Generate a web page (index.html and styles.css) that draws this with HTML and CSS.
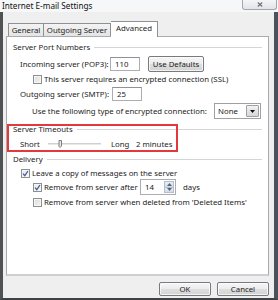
FILE: index.html
```html
<!DOCTYPE html>
<html>
<head>
<meta charset="utf-8">
<link rel="stylesheet" href="styles.css">
</head>
<body>
<div class="window">
  <div class="titlebar">
    <span class="title">Internet E-mail Settings</span>
    <span class="close"><svg width="6" height="5" viewBox="0 0 6 5"><path d="M0.8 0.5 L5.2 4.5 M5.2 0.5 L0.8 4.5" stroke="#707070" stroke-width="1.1" fill="none"/></svg></span>
  </div>
  <div class="frame">
    <div class="tabs">
      <div class="tab t-general">General</div>
      <div class="tab t-outgoing">Outgoing Server</div>
      <div class="tab t-advanced selected">Advanced</div>
    </div>
    <div class="panel">
      <div class="group-head"><span>Server Port Numbers</span><span class="rule"></span></div>

      <div class="row r-incoming">
        <span class="lbl lbl-in">Incoming server (POP3):</span>
        <span class="input in-port">110</span>
        <span class="btn btn-defaults">Use Defaults</span>
      </div>

      <div class="row r-ssl">
        <span class="cb"></span>
        <span class="cb-text">This server requires an encrypted connection (SSL)</span>
      </div>

      <div class="row r-outgoing">
        <span class="lbl lbl-out">Outgoing server (SMTP):</span>
        <span class="input out-port">25</span>
      </div>

      <div class="row r-encrypt">
        <span class="lbl lbl-enc">Use the following type of encrypted connection:</span>
        <span class="select"><span class="sel-text">None</span><span class="sel-btn"><svg width="5" height="3" viewBox="0 0 5 3"><path d="M0 0 H5 L2.5 3 Z" fill="#111"/></svg></span></span>
      </div>

      <div class="group-head gh-timeouts"><span>Server Timeouts</span><span class="rule"></span></div>

      <div class="row r-slider">
        <span class="lbl lbl-short">Short</span>
        <span class="slider"><span class="track"></span><svg class="thumb" width="5" height="8" viewBox="0 0 5 8"><path d="M1 0.5 H3.5 V6 L2 7.5 L1 6.5 Z" fill="#e9e9e9" stroke="#6f6f6f" stroke-width="0.9"/></svg></span>
        <span class="lbl lbl-long">Long</span>
        <span class="lbl">2 minutes</span>
      </div>

      <div class="group-head gh-delivery"><span>Delivery</span><span class="rule"></span></div>

      <div class="row r-leave">
        <span class="cb checked"><svg width="7" height="7" viewBox="0 0 7 7"><path d="M1 3.6 L2.8 5.6 L6 1" stroke="#4a5d93" stroke-width="1.3" fill="none"/></svg></span>
        <span class="cb-text">Leave a copy of messages on the server</span>
      </div>

      <div class="row r-remove">
        <span class="cb checked"><svg width="7" height="7" viewBox="0 0 7 7"><path d="M1 3.6 L2.8 5.6 L6 1" stroke="#4a5d93" stroke-width="1.3" fill="none"/></svg></span>
        <span class="cb-text lbl-remove">Remove from server after</span>
        <span class="spin"><span class="spin-text">14</span><span class="spin-btns"><span class="spin-up"><svg width="5" height="3" viewBox="0 0 5 3"><path d="M0 3 H5 L2.5 0 Z" fill="#56657e"/></svg></span><span class="spin-down"><svg width="5" height="3" viewBox="0 0 5 3"><path d="M0 0 H5 L2.5 3 Z" fill="#56657e"/></svg></span></span></span>
        <span class="lbl lbl-days">days</span>
      </div>

      <div class="row r-deleted">
        <span class="cb"></span>
        <span class="cb-text">Remove from server when deleted from 'Deleted Items'</span>
      </div>

      <div class="highlight"></div>
    </div>
    <div class="footer">
      <span class="btn btn-ok">OK</span>
      <span class="btn btn-cancel">Cancel</span>
    </div>
  </div>
</div>
</body>
</html>
```

FILE: styles.css
```css
* { box-sizing: border-box; }
html, body { margin: 0; padding: 0; }
body {
  font-family: "Noto Sans", "Open Sans", sans-serif;
  font-size: 7.8px;
  color: #1c1c1c;
  background: #ffffff;
}
.window {
  width: 278px;
  height: 300px;
  display: flex;
  flex-direction: column;
  background: #efefef;
}
.titlebar {
  height: 12px;
  flex: none;
  display: flex;
  justify-content: space-between;
  align-items: flex-start;
  background: #f6f7f8;
}
.title {
  padding-left: 2px;
  line-height: 12px;
  font-size: 8.2px;
  color: #111;
}
.close {
  width: 35px;
  height: 10px;
  margin-right: 1px;
  border: 1px solid #a3a7ad;
  border-top: none;
  border-radius: 0 0 3px 3px;
  background: linear-gradient(#f4f5f7, #e2e4e8);
  display: flex;
  align-items: center;
  justify-content: center;
}
.frame {
  flex: 1;
  display: flex;
  flex-direction: column;
  border-left: 3px solid #4f5255;
  border-right: 4px solid #4a535c;
  border-bottom: 2px solid #3f4245;
  background: #efefef;
}
.tabs {
  height: 15px;
  margin-top: 9px;
  margin-left: 5px;
  display: flex;
  align-items: flex-end;
}
.tab {
  height: 13px;
  border: 1px solid #8d9096;
  border-bottom: none;
  background: linear-gradient(#f3f3f3, #e4e4e4);
  display: flex;
  align-items: center;
  justify-content: center;
  line-height: 11px;
  padding-top: 1px;
  white-space: nowrap;
}
.t-general { width: 36px; }
.t-outgoing { width: 67px; border-left: none; }
.t-advanced { width: 47px; border-left: none; }
.tab.selected {
  height: 16px;
  margin-bottom: -1px;
  background: #ffffff;
  position: relative;
  z-index: 2;
  padding-top: 0;
  padding-bottom: 3px;
}
.panel {
  position: relative;
  height: 240px;
  margin-left: 3px;
  margin-right: 5px;
  background: #ffffff;
  border: 1px solid #a9abae;
  border-bottom: 2px solid #cfcfd1;
  padding: 4px 6px 0 6px;
}
.group-head {
  height: 12px;
  display: flex;
  align-items: center;
  line-height: 12px;
}
.group-head .rule {
  flex: 1;
  height: 1px;
  margin-left: 4px;
  background: #d3d5d8;
}
.gh-timeouts { margin-top: 4px; }
.gh-delivery { margin-top: 2px; }
.row {
  display: flex;
  align-items: center;
  line-height: 12px;
  white-space: nowrap;
}
.lbl { display: inline-block; }
.r-incoming { height: 16px; margin-top: 3px; padding-left: 7px; }
.lbl-in { width: 90px; }
.input {
  height: 14px;
  background: #fff;
  border: 1px solid #abadb3;
  border-top-color: #8e9197;
  padding-left: 4px;
  line-height: 12px;
}
.in-port { width: 30px; }
.btn {
  display: flex;
  align-items: center;
  justify-content: center;
  border: 1px solid #777a7f;
  border-radius: 2px;
  background: linear-gradient(#f6f6f6 0%, #ececec 50%, #dedede 52%, #d3d3d3 100%);
  box-shadow: inset 0 0 0 1px rgba(255,255,255,0.7);
  line-height: 12px;
}
.btn-defaults { width: 56px; height: 16px; margin-left: 8px; }
.r-ssl { height: 12px; margin-top: 1px; padding-left: 20px; }
.cb {
  width: 9px;
  height: 9px;
  flex: none;
  border: 1px solid #8e8f8f;
  background: linear-gradient(135deg, #dcdcdc, #f4f4f4);
  box-shadow: inset 0 0 0 1px #f6f6f6;
  display: flex;
  align-items: center;
  justify-content: center;
}
.cb.checked { background: linear-gradient(135deg, #e2e6ee, #f8f9fb); }
.cb-text { margin-left: 2px; }
.r-outgoing { height: 16px; margin-top: 1px; padding-left: 7px; }
.lbl-out { width: 92px; }
.out-port { width: 30px; }
.r-encrypt { height: 16px; margin-top: 1px; padding-left: 19px; }
.lbl-enc { width: 182px; }
.select {
  width: 47px;
  height: 16px;
  border: 1px solid #9ea2a8;
  background: #fff;
  display: flex;
  align-items: center;
  padding: 1px;
}
.sel-text { flex: 1; padding-left: 2px; }
.sel-btn {
  width: 13px;
  height: 12px;
  border: 1px solid #9da1a6;
  border-radius: 1px;
  background: linear-gradient(#f2f2f2, #d6d6d6);
  display: flex;
  align-items: center;
  justify-content: center;
}
.r-slider { height: 14px; margin-top: 2px; padding-left: 7px; }
.lbl-short { width: 28px; }
.slider {
  width: 53px;
  height: 10px;
  display: flex;
  align-items: center;
  position: relative;
}
.track {
  width: 100%;
  height: 2px;
  background: #cfd0d2;
  border-bottom: 1px solid #e8e8e8;
}
.thumb { position: absolute; left: 10px; top: 1px; }
.lbl-long { margin-left: 10px; width: 25px; }
.r-leave { height: 12px; margin-top: 2px; padding-left: 8px; }
.r-remove { height: 16px; padding-left: 20px; }
.lbl-remove { width: 96px; }
.spin {
  width: 36px;
  height: 16px;
  border: 1px solid #abadb3;
  background: #fff;
  display: flex;
  align-items: stretch;
}
.spin-text { flex: 1; padding-left: 4px; line-height: 14px; }
.spin-btns {
  width: 11px;
  display: flex;
  flex-direction: column;
  padding: 1px 1px 1px 0;
}
.spin-up, .spin-down {
  flex: 1;
  background: linear-gradient(#e9eef5, #d2dbe6);
  border: 1px solid #b4bfcd;
  display: flex;
  align-items: center;
  justify-content: center;
}
.spin-down { border-top: none; }
.lbl-days { margin-left: 7px; }
.r-deleted { height: 12px; margin-top: 1px; padding-left: 20px; }
.highlight {
  position: absolute;
  left: 0;
  top: 87px;
  width: 171px;
  height: 28px;
  border: 2px solid #e2393c;
}
.footer {
  display: flex;
  justify-content: flex-end;
  gap: 6px;
  margin-top: 6px;
  margin-right: 5px;
}
.btn-ok, .btn-cancel { width: 52px; height: 14px; }
```
